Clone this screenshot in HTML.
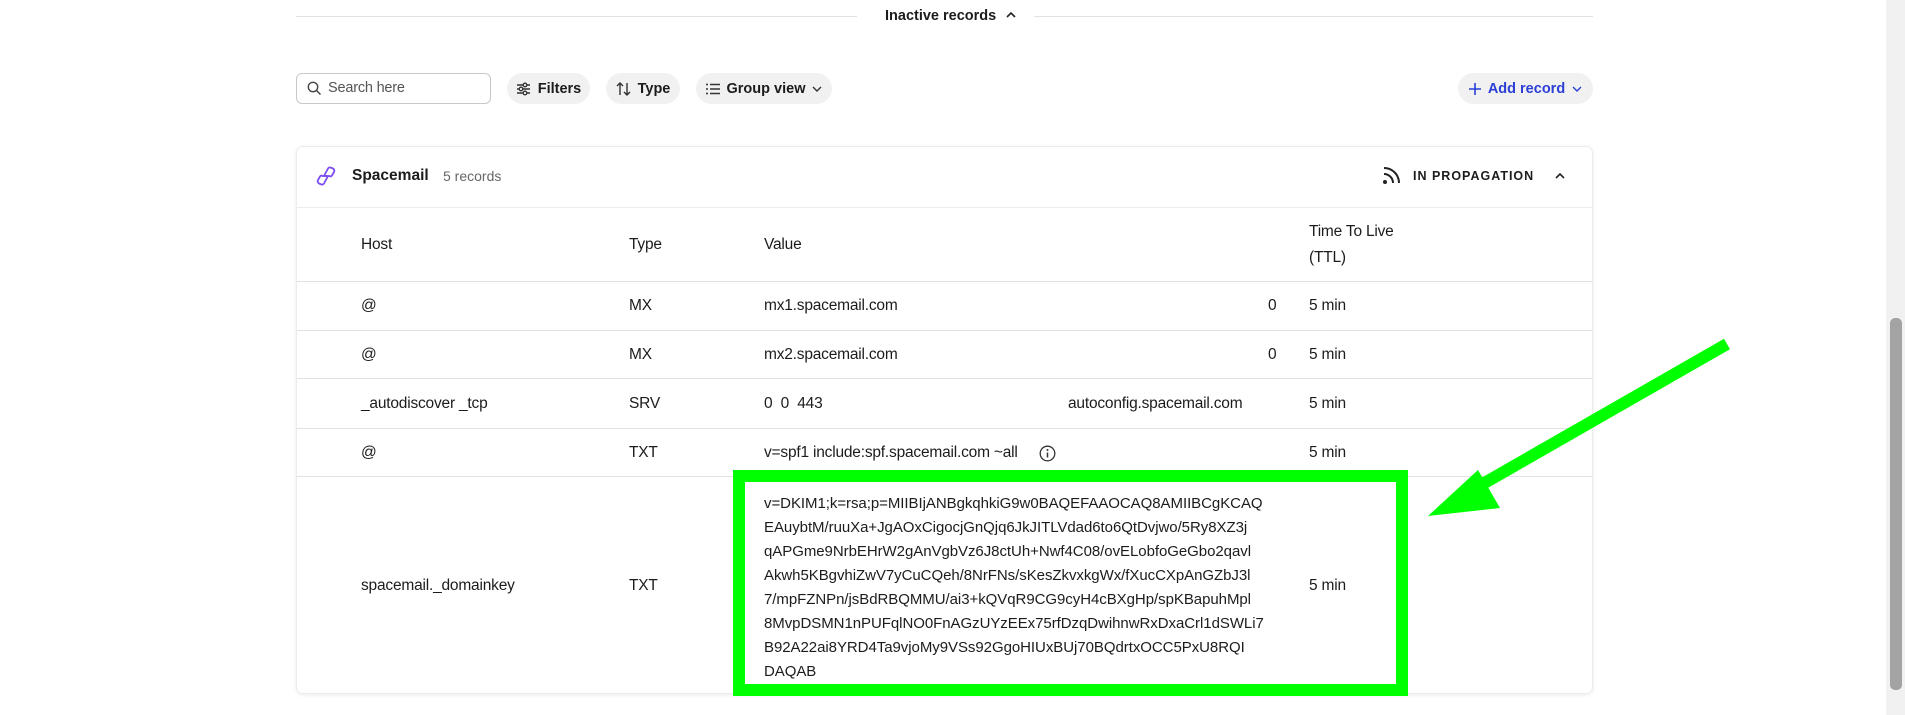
<!DOCTYPE html>
<html><head><meta charset="utf-8"><style>
*{box-sizing:border-box;margin:0;padding:0}
body{width:1905px;height:715px;overflow:hidden;background:#fff;font-family:"Liberation Sans",sans-serif;color:#1c1c1c;position:relative}
.a{position:absolute;white-space:nowrap}
.t{font-size:15.5px;letter-spacing:-0.2px}
.line{position:absolute;height:1px;background:#e2e2e2}
.pill{position:absolute;top:73px;height:31px;border-radius:16px;background:#f1f1f1;font-weight:bold;font-size:14.5px;display:flex;align-items:center;justify-content:center;gap:7px}
.sb{position:absolute;right:0;top:0;width:19px;height:715px;background:#f1f1f1}
.th{position:absolute;right:3px;top:318px;width:12px;height:372px;background:#a3a3a3;border-radius:5px}
</style></head><body>
<div class="line" style="left:296px;width:561px;top:16px"></div>
<div class="line" style="left:1034px;width:559px;top:16px"></div>
<div class="a" style="left:885px;top:8px;font-weight:bold;font-size:14.5px">Inactive records <svg width="12" height="10" viewBox="0 0 12 10" style="margin-left:5px"><path d="M2 7l4-4 4 4" stroke="#222" stroke-width="1.6" fill="none"/></svg></div>

<div class="a" style="left:296px;top:73px;width:195px;height:31px;border:1px solid #c8c8c8;border-radius:6px"></div>
<svg class="a" style="left:307px;top:81px" width="15" height="15" viewBox="0 0 15 15"><circle cx="6" cy="6" r="4.7" stroke="#444" stroke-width="1.4" fill="none"/><path d="M9.5 9.5l4 4" stroke="#444" stroke-width="1.4"/></svg>
<div class="a t" style="left:328px;top:80px;color:#555;font-size:14.5px">Search here</div>

<div class="pill" style="left:507px;width:83px"><svg width="15" height="14" viewBox="0 0 15 14"><path d="M1 3h13M1 7h13M1 11h13" stroke="#333" stroke-width="1.4"/><circle cx="9" cy="3" r="1.8" fill="#f1f1f1" stroke="#333" stroke-width="1.3"/><circle cx="5" cy="7" r="1.8" fill="#f1f1f1" stroke="#333" stroke-width="1.3"/><circle cx="9" cy="11" r="1.8" fill="#f1f1f1" stroke="#333" stroke-width="1.3"/></svg>Filters</div>
<div class="pill" style="left:606px;width:74px"><svg width="15" height="14" viewBox="0 0 15 14"><path d="M4 13V1M1 4l3-3 3 3M11 1v12M8 10l3 3 3-3" stroke="#333" stroke-width="1.4" fill="none"/></svg>Type</div>
<div class="pill" style="left:696px;width:136px"><svg width="14" height="12" viewBox="0 0 14 12"><path d="M4 1.5h10M4 6h10M4 10.5h10" stroke="#333" stroke-width="1.4"/><circle cx="1" cy="1.5" r="1" fill="#333"/><circle cx="1" cy="6" r="1" fill="#333"/><circle cx="1" cy="10.5" r="1" fill="#333"/></svg>Group view <svg width="10" height="8" viewBox="0 0 10 8"><path d="M1 2l4 4 4-4" stroke="#333" stroke-width="1.4" fill="none"/></svg></div>
<div class="pill" style="left:1458px;width:135px;color:#2b3fd6"><svg width="12" height="12" viewBox="0 0 12 12"><path d="M6 0v12M0 6h12" stroke="#2b3fd6" stroke-width="1.6"/></svg>Add record <svg width="10" height="8" viewBox="0 0 10 8"><path d="M1 2l4 4 4-4" stroke="#2b3fd6" stroke-width="1.4" fill="none"/></svg></div>

<div class="a" style="left:296px;top:146px;width:1297px;height:548px;border:1px solid #ececec;border-radius:7px;box-shadow:0 1px 4px rgba(0,0,0,.08)"></div>
<svg class="a" style="left:315px;top:165px" width="22" height="22" viewBox="0 0 22 22"><path d="M9 11L13 3.5Q14 2 15.5 2.5L18 3.5Q20 5 19 7L17 10.5Q16 12 14.5 11Z" stroke="#7b4ef2" stroke-width="1.8" fill="none" stroke-linejoin="round"/><path d="M13 11L9 18.5Q8 20 6.5 19.5L4 18.5Q2 17 3 15L5 11.5Q6 10 7.5 11Z" stroke="#7b4ef2" stroke-width="1.8" fill="none" stroke-linejoin="round"/></svg>
<div class="a" style="left:352px;top:167px;font-weight:bold;font-size:15.5px">Spacemail</div>
<div class="a" style="left:443px;top:168px;font-size:14px;color:#666">5 records</div>
<svg class="a" style="left:1382px;top:165px" width="20" height="20" viewBox="0 0 20 20"><circle cx="3" cy="17" r="2" fill="#222"/><path d="M2 9a9 9 0 0 1 9 9M2 3a15 15 0 0 1 15 15" stroke="#222" stroke-width="2" fill="none"/></svg>
<div class="a" style="left:1413px;top:169px;font-weight:bold;font-size:12.5px;letter-spacing:1px">IN PROPAGATION</div>
<svg class="a" style="left:1554px;top:171px" width="12" height="10" viewBox="0 0 12 10"><path d="M2 7l4-4 4 4" stroke="#222" stroke-width="1.6" fill="none"/></svg>

<div class="line" style="left:297px;width:1295px;top:207px;background:#ececec"></div>
<div class="a t" style="left:361px;top:236px">Host</div>
<div class="a t" style="left:629px;top:236px">Type</div>
<div class="a t" style="left:764px;top:236px">Value</div>
<div class="a t" style="left:1309px;top:223px">Time To Live</div>
<div class="a t" style="left:1309px;top:249px">(TTL)</div>
<div class="line" style="left:297px;width:1295px;top:281px"></div>
<div class="line" style="left:297px;width:1295px;top:330px"></div>
<div class="line" style="left:297px;width:1295px;top:378px"></div>
<div class="line" style="left:297px;width:1295px;top:428px"></div>
<div class="line" style="left:297px;width:1295px;top:476px"></div>

<div class="a t" style="left:361px;top:297px">@</div><div class="a t" style="left:629px;top:297px">MX</div><div class="a t" style="left:764px;top:297px">mx1.spacemail.com</div><div class="a t" style="left:1268px;top:297px">0</div><div class="a t" style="left:1309px;top:297px">5 min</div>
<div class="a t" style="left:361px;top:346px">@</div><div class="a t" style="left:629px;top:346px">MX</div><div class="a t" style="left:764px;top:346px">mx2.spacemail.com</div><div class="a t" style="left:1268px;top:346px">0</div><div class="a t" style="left:1309px;top:346px">5 min</div>
<div class="a t" style="left:361px;top:395px">_autodiscover _tcp</div><div class="a t" style="left:629px;top:395px">SRV</div><div class="a t" style="left:764px;top:395px">0&nbsp;&nbsp;0&nbsp;&nbsp;443</div><div class="a t" style="left:1068px;top:395px">autoconfig.spacemail.com</div><div class="a t" style="left:1309px;top:395px">5 min</div>
<div class="a t" style="left:361px;top:444px">@</div><div class="a t" style="left:629px;top:444px">TXT</div><div class="a t" style="left:764px;top:444px">v=spf1 include:spf.spacemail.com ~all</div>
<svg class="a" style="left:1039px;top:445px" width="17" height="17" viewBox="0 0 17 17"><circle cx="8.5" cy="8.5" r="7.3" stroke="#333" stroke-width="1.3" fill="none"/><path d="M8.5 7.5v5" stroke="#333" stroke-width="1.5"/><circle cx="8.5" cy="5" r="1" fill="#333"/></svg>
<div class="a t" style="left:1309px;top:444px">5 min</div>

<div class="a t" style="left:361px;top:577px">spacemail._domainkey</div><div class="a t" style="left:629px;top:577px">TXT</div><div class="a t" style="left:1309px;top:577px">5 min</div>
<div class="a t" style="left:764px;top:492px;line-height:24px;font-size:15px;letter-spacing:-0.05px">v=DKIM1;k=rsa;p=MIIBIjANBgkqhkiG9w0BAQEFAAOCAQ8AMIIBCgKCAQ<br>EAuybtM/ruuXa+JgAOxCigocjGnQjq6JkJITLVdad6to6QtDvjwo/5Ry8XZ3j<br>qAPGme9NrbEHrW2gAnVgbVz6J8ctUh+Nwf4C08/ovELobfoGeGbo2qavl<br>Akwh5KBgvhiZwV7yCuCQeh/8NrFNs/sKesZkvxkgWx/fXucCXpAnGZbJ3l<br>7/mpFZNPn/jsBdRBQMMU/ai3+kQVqR9CG9cyH4cBXgHp/spKBapuhMpl<br>8MvpDSMN1nPUFqlNO0FnAGzUYzEEx75rfDzqDwihnwRxDxaCrl1dSWLi7<br>B92A22ai8YRD4Ta9vjoMy9VSs92GgoHIUxBUj70BQdrtxOCC5PxU8RQI<br>DAQAB</div>

<div class="a" style="left:733px;top:470px;width:675px;height:226px;border:12px solid #00ff00"></div>
<svg class="a" style="left:0;top:0" width="1905" height="715"><path d="M1727 344L1460 497" stroke="#00ff00" stroke-width="12"/><path d="M1428 516L1478 470L1500 508Z" fill="#00ff00"/></svg>
<div class="sb"></div><div class="th"></div>
</body></html>
